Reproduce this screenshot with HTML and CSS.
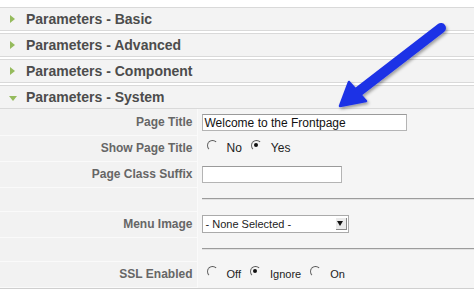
FILE: index.html
```html
<!DOCTYPE html>
<html lang="en">

<head>
    <meta charset="UTF-8">
    <title>Parameters - System</title>
    <link rel="stylesheet" href="styles.css">
</head>

<body>
    <div class="pane">
        <!-- Collapsed panels -->
        <h3 class="panel-title"><span class="toggle closed"></span>Parameters - Basic</h3>
        <h3 class="panel-title"><span class="toggle closed"></span>Parameters - Advanced</h3>
        <h3 class="panel-title"><span class="toggle closed"></span>Parameters - Component</h3>

        <!-- Open panel -->
        <h3 class="panel-title open-title"><span class="toggle open"></span>Parameters - System</h3>
        <table class="paramlist">
            <tr>
                <td class="key">Page Title</td>
                <td class="value"><div class="text-input wide">Welcome to the Frontpage</div></td>
            </tr>
            <tr>
                <td class="key">Show Page Title</td>
                <td class="value">
                    <div class="radios">
                        <span class="radio"></span><span class="opt">No</span>
                        <span class="radio checked"></span><span class="opt">Yes</span>
                    </div>
                </td>
            </tr>
            <tr>
                <td class="key">Page Class Suffix</td>
                <td class="value"><div class="text-input short"></div></td>
            </tr>
            <tr class="spacer">
                <td class="key"></td>
                <td class="value"><div class="rule"></div></td>
            </tr>
            <tr>
                <td class="key">Menu Image</td>
                <td class="value">
                    <div class="select-box">
                        <span>- None Selected -</span>
                        <span class="select-btn"></span>
                    </div>
                </td>
            </tr>
            <tr class="spacer">
                <td class="key"></td>
                <td class="value"><div class="rule"></div></td>
            </tr>
            <tr>
                <td class="key">SSL Enabled</td>
                <td class="value">
                    <div class="radios small">
                        <span class="radio"></span><span class="opt">Off</span>
                        <span class="radio checked"></span><span class="opt">Ignore</span>
                        <span class="radio"></span><span class="opt">On</span>
                    </div>
                </td>
            </tr>
        </table>
        <div class="pane-bottom"></div>
    </div>

    <!-- Callout arrow -->
    <svg class="callout" width="474" height="289" viewBox="0 0 474 289">
        <defs>
            <filter id="shade" x="-20%" y="-20%" width="140%" height="140%">
                <feDropShadow dx="1.5" dy="2" stdDeviation="1.5" flood-color="#000" flood-opacity="0.35"/>
            </filter>
        </defs>
        <g filter="url(#shade)">
            <line x1="441" y1="28" x2="358" y2="92" stroke="#1f33e6" stroke-width="10" stroke-linecap="round"/>
            <path d="M340 106 L349 82 Q357 91 366 101 Z" fill="#1f33e6" stroke="#1f33e6" stroke-width="2.5" stroke-linejoin="round"/>
        </g>
    </svg>
</body>

</html>
```

FILE: styles.css
```css
/* Base */
* {
    margin: 0;
    padding: 0;
    box-sizing: border-box;
}

body {
    width: 474px;
    height: 289px;
    overflow: hidden;
    position: relative;
    background-color: #ffffff;
    font-family: 'Liberation Sans', Arial, sans-serif;
    color: #333;
}

.pane {
    padding-top: 7px;
    width: 480px;
}

/* Panel headers */
.panel-title {
    display: flex;
    align-items: center;
    height: 24px;
    margin-bottom: 2px;
    padding-left: 10px;
    background-color: #f3f3f3;
    border-top: 1px solid #d9d9d9;
    border-bottom: 1px solid #d9d9d9;
    font-size: 14px;
    font-weight: bold;
    color: #4c4c4c;
}

.open-title {
    margin-bottom: 0;
}

.toggle {
    width: 0;
    height: 0;
    margin-right: 11px;
}

.toggle.closed {
    border-top: 4.5px solid transparent;
    border-bottom: 4.5px solid transparent;
    border-left: 5px solid #95bb5c;
}

.toggle.open {
    margin-left: -1px;
    margin-right: 9px;
    border-left: 4.5px solid transparent;
    border-right: 4.5px solid transparent;
    border-top: 5px solid #95bb5c;
    margin-top: 2px;
}

/* Parameter table */
.paramlist {
    width: 100%;
    border-collapse: collapse;
    background-color: #f5f5f5;
}

.paramlist td {
    height: 26px;
    vertical-align: middle;
}

.paramlist .spacer td {
    height: 24px;
}

.key {
    width: 197px;
    padding-right: 4px;
    text-align: right;
    font-size: 12px;
    font-weight: bold;
    color: #666;
    background-color: #f2f2f2;
    border-right: 1px solid #fafafa;
    border-bottom: 1px solid #fafafa;
}

.value {
    padding-left: 4px;
    font-size: 12px;
}

.text-input {
    height: 17px;
    background-color: #ffffff;
    border: 1px solid #b4b4b4;
    border-top-color: #9a9a9a;
    padding: 1px 2px;
    font-size: 12px;
    line-height: 14px;
    color: #111;
}

.text-input.wide {
    width: 205px;
}

.text-input.short {
    width: 140px;
}

.rule {
    height: 1px;
    background-color: #9c9c9c;
    border-bottom: 1px solid #e2e2e2;
    box-sizing: content-box;
}

/* Radios */
.radios {
    display: flex;
    align-items: center;
    padding-left: 5px;
    font-size: 12px;
    color: #222;
}

.radios.small {
    font-size: 11px;
}

.radio {
    position: relative;
    width: 11px;
    height: 11px;
    margin-right: 9px;
    border-radius: 50%;
    border: 1.5px solid transparent;
    border-left-color: #666;
    border-top-color: #555;
    margin-top: -5px;
}

.radio.checked::after {
    content: "";
    position: absolute;
    left: 2px;
    top: 1.5px;
    width: 4px;
    height: 4px;
    border-radius: 50%;
    background-color: #111;
}

.opt {
    margin-right: 9px;
}

/* Select */
.select-box {
    display: flex;
    align-items: center;
    justify-content: space-between;
    width: 147px;
    height: 18px;
    background-color: #ffffff;
    border: 1px solid #aaaaaa;
    padding-left: 3px;
    font-size: 11px;
    color: #222;
}

.select-btn {
    position: relative;
    width: 11px;
    height: 12px;
    margin-right: 1px;
    background-color: #eaeaea;
    border-right: 1px solid #888;
    border-bottom: 1px solid #888;
}

.select-btn::after {
    content: "";
    position: absolute;
    left: 1.5px;
    top: 3px;
    border-left: 3.5px solid transparent;
    border-right: 3.5px solid transparent;
    border-top: 5px solid #111;
}

.pane-bottom {
    height: 6px;
    background-color: #dcdcdc;
    border-top: 1px solid #cfcfcf;
}

/* Arrow overlay */
.callout {
    position: absolute;
    left: 0;
    top: 0;
    pointer-events: none;
}
```
